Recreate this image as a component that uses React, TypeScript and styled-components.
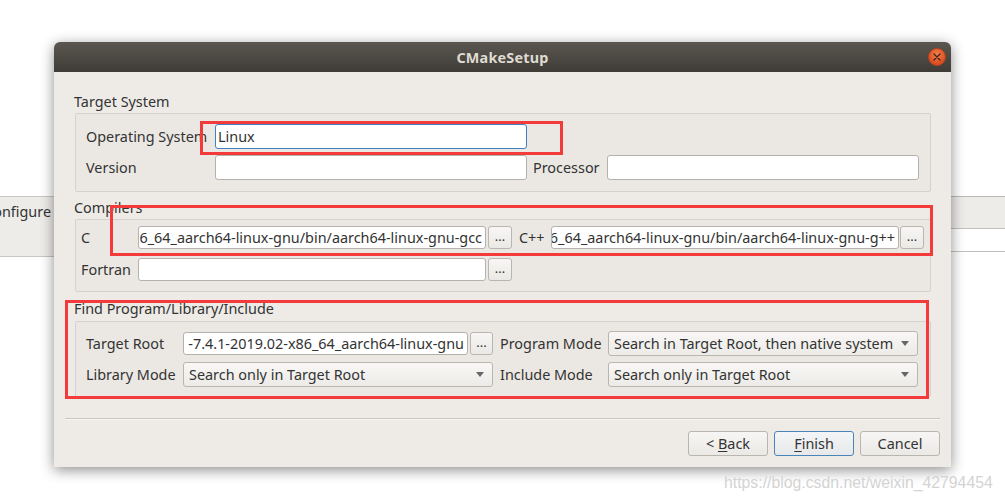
import React from 'react';
import styled, { createGlobalStyle } from 'styled-components';

const Global = createGlobalStyle`
  html, body { margin: 0; padding: 0; background: #ffffff; }
  body {
    width: 1005px; height: 503px; overflow: hidden;
    font-family: "Noto Sans", "Open Sans", "DejaVu Sans", sans-serif;
    color: #333333;
  }
  * { box-sizing: border-box; }
`;

const FS = '14.4px';

const Desktop = styled.div`
  position: relative;
  width: 1005px;
  height: 503px;
  overflow: hidden;
  background: #ffffff;
`;

const BackApp = styled.div`
  display: flex;
  justify-content: space-between;
  align-items: flex-start;
  padding-top: 196px;
`;

const LeftStrip = styled.div`
  width: 70px;
  height: 61px;
  border-top: 1px solid #c9c6c2;
  border-bottom: 1px solid #c9c6c2;
  background: #eeece9;
  display: flex;
  justify-content: flex-end;
  padding: 6px 19px 0 0;
  overflow: hidden;
  font-size: ${FS};
  line-height: 18px;
  white-space: nowrap;
  color: #333;
`;

const RightStrip = styled.div`
  width: 70px;
  display: flex;
  flex-direction: column;
`;

const RightBand = styled.div<{ $h: number; $bg: string }>`
  height: ${p => p.$h}px;
  background: ${p => p.$bg};
  border-bottom: 1px solid #c4c1bd;
`;

const RightTop = styled.div`
  border-top: 1px solid #bdbab6;
`;

const Dialog = styled.div`
  position: absolute;
  left: 54px;
  top: 42px;
  width: 897px;
  height: 425px;
  border-radius: 6px 6px 0 0;
  background: #eeebe7;
  box-shadow: 0 3px 14px rgba(0, 0, 0, 0.45);
  display: flex;
  flex-direction: column;
`;

const TitleBar = styled.div`
  position: relative;
  height: 30px;
  border-radius: 6px 6px 0 0;
  background: linear-gradient(#5a564f, #3f3c37);
  display: flex;
  align-items: center;
  justify-content: center;
  color: #dfdbd2;
  font-weight: 700;
  font-size: 14.4px;
  letter-spacing: 0.2px;
`;

const CloseButton = styled.div`
  position: absolute;
  right: 5px;
  top: 6px;
  width: 18px;
  height: 18px;
  border-radius: 50%;
  background: radial-gradient(circle at 50% 35%, #f2804f, #dc4d1f 70%);
  border: 1px solid #b8431c;
  display: flex;
  align-items: center;
  justify-content: center;
`;

const Body = styled.div`
  flex: 1;
  display: flex;
  flex-direction: column;
  padding: 0 11px 10px 11px;
`;

const Group = styled.div<{ $mt: number }>`
  margin-top: ${p => p.$mt}px;
  padding: 0 9px;
  display: flex;
  flex-direction: column;
`;

const GroupTitle = styled.div<{ $mb: number }>`
  font-size: ${FS};
  line-height: 18px;
  height: 18px;
  margin-bottom: ${p => p.$mb}px;
  white-space: nowrap;
`;

const Frame = styled.div<{ $cols: string; $rows: string; $pad: string; $gap: number }>`
  margin-left: 1px;
  border: 1px solid #d5d1cc;
  border-radius: 2px;
  background: #ebe8e4;
  padding: ${p => p.$pad};
  display: grid;
  grid-template-columns: ${p => p.$cols};
  grid-template-rows: ${p => p.$rows};
  row-gap: ${p => p.$gap}px;
  align-items: center;
`;

const Label = styled.div<{ $pl?: number }>`
  font-size: ${FS};
  line-height: 18px;
  white-space: nowrap;
  padding-left: ${p => p.$pl ?? 0}px;
`;

const LineEdit = styled.div<{ $focused?: boolean; $end?: boolean; $span?: number; $h: number }>`
  grid-column: ${p => (p.$span ? `span ${p.$span}` : 'auto')};
  height: ${p => p.$h}px;
  background: #ffffff;
  border: 1px solid ${p => (p.$focused ? '#3f82c3' : '#b5b1ab')};
  border-radius: 3px;
  display: flex;
  align-items: center;
  justify-content: ${p => (p.$end ? 'flex-end' : 'flex-start')};
  padding: 0 3px 0 2px;
  overflow: hidden;
  font-size: ${FS};
  white-space: nowrap;
  color: #333;
`;

const EditRow = styled.div`
  grid-column: span 3;
  display: flex;
`;

const FixedEdit = styled(LineEdit)`
  width: 312px;
  flex: none;
`;

const ToolButton = styled.div<{ $w: number; $h: number }>`
  justify-self: end;
  width: ${p => p.$w}px;
  height: ${p => p.$h}px;
  border: 1px solid #b9b5af;
  border-radius: 3px;
  background: linear-gradient(#f7f6f4, #ebe9e6);
  display: flex;
  align-items: center;
  justify-content: center;
  font-size: 13px;
  padding-bottom: 3px;
  color: #333;
`;

const Combo = styled.div<{ $span?: number }>`
  grid-column: ${p => (p.$span ? `span ${p.$span}` : 'auto')};
  height: 25px;
  border: 1px solid #b9b5af;
  border-radius: 3px;
  background: linear-gradient(#f8f7f5, #ecebe8);
  display: flex;
  align-items: center;
  justify-content: space-between;
  padding: 0 8px 0 5px;
  font-size: ${FS};
  white-space: nowrap;
  color: #333;
`;

const Arrow = styled.span`
  width: 0;
  height: 0;
  border-left: 4px solid transparent;
  border-right: 4px solid transparent;
  border-top: 5px solid #666;
`;

const Separator = styled.div`
  margin-top: 21px;
  height: 2px;
  border-top: 1px solid #c9c5c0;
  border-bottom: 1px solid #f8f7f5;
`;

const ButtonRow = styled.div`
  margin-top: 11px;
  display: flex;
  justify-content: flex-end;
  gap: 6px;
`;

const PushButton = styled.div<{ $default?: boolean }>`
  width: 80px;
  height: 25px;
  border: 1px solid ${p => (p.$default ? '#4b84b8' : '#b9b5af')};
  border-radius: 3px;
  background: ${p => (p.$default ? 'linear-gradient(#f4f5f6, #e6e8ea)' : 'linear-gradient(#f7f6f4, #ebe9e6)')};
  display: flex;
  align-items: center;
  justify-content: center;
  font-size: ${FS};
  color: #333;
  u { text-decoration-thickness: 1px; text-underline-offset: 2px; }
`;

const Annotation = styled.div<{ $x: number; $y: number; $w: number; $h: number }>`
  position: absolute;
  left: ${p => p.$x}px;
  top: ${p => p.$y}px;
  width: ${p => p.$w}px;
  height: ${p => p.$h}px;
  border: 3px solid #f33b3b;
  pointer-events: none;
`;

const Watermark = styled.div`
  position: absolute;
  left: 724px;
  top: 474px;
  font-family: "Liberation Sans", Arial, sans-serif;
  font-size: 15.8px;
  color: rgba(205, 205, 205, 0.9);
  text-shadow: 0 0 1px #fff;
  white-space: nowrap;
`;

export default function App() {
  return (
    <Desktop>
      <Global />
      <BackApp>
        <LeftStrip>onfigure</LeftStrip>
        <RightStrip>
          <RightTop />
          <RightBand $h={32} $bg="#eeece9" />
          <RightBand $h={23} $bg="#ffffff" />
        </RightStrip>
      </BackApp>

      <Dialog>
        <TitleBar>
          CMakeSetup
          <CloseButton>
            <svg width="8" height="8" viewBox="0 0 8 8">
              <path d="M1 1 L7 7 M7 1 L1 7" stroke="#3a2418" strokeWidth="1.3" strokeLinecap="round" />
            </svg>
          </CloseButton>
        </TitleBar>
        <Body>
          <Group $mt={21}>
            <GroupTitle $mb={2}>Target System</GroupTitle>
            <Frame $cols="129px 312px 80px 312px" $rows="25px 25px" $pad="10px 11px 11px 10px" $gap={6}>
              <Label>Operating System</Label>
              <EditRow>
                <FixedEdit $focused $h={25}>Linux</FixedEdit>
              </EditRow>
              <Label>Version</Label>
              <LineEdit $h={25} />
              <Label $pl={6}>Processor</Label>
              <LineEdit $h={25} />
            </Frame>
          </Group>

          <Group $mt={7}>
            <GroupTitle $mb={2}>Compilers</GroupTitle>
            <Frame $cols="57px 348px 26px 39px 348px 25px" $rows="23px 23px" $pad="6px 7px 10px 5px" $gap={9}>
              <Label>C</Label>
              <LineEdit $h={23} $end>6_64_aarch64-linux-gnu/bin/aarch64-linux-gnu-gcc</LineEdit>
              <ToolButton $w={24} $h={23}>...</ToolButton>
              <Label $pl={7}>C++</Label>
              <LineEdit $h={23} $end>6_64_aarch64-linux-gnu/bin/aarch64-linux-gnu-g++</LineEdit>
              <ToolButton $w={24} $h={23}>...</ToolButton>
              <Label>Fortran</Label>
              <LineEdit $h={23} />
              <ToolButton $w={24} $h={23}>...</ToolButton>
            </Frame>
          </Group>

          <Group $mt={8}>
            <GroupTitle $mb={3}>Find Program/Library/Include</GroupTitle>
            <Frame $cols="97px 285px 25px 115px 310px" $rows="23px 25px" $pad="10px 12px 9px 10px" $gap={7}>
              <Label>Target Root</Label>
              <LineEdit $h={23} $end>-7.4.1-2019.02-x86_64_aarch64-linux-gnu</LineEdit>
              <ToolButton $w={23} $h={23}>...</ToolButton>
              <Label $pl={7}>Program Mode</Label>
              <Combo>
                Search in Target Root, then native system
                <Arrow />
              </Combo>
              <Label>Library Mode</Label>
              <Combo $span={2}>
                Search only in Target Root
                <Arrow />
              </Combo>
              <Label $pl={7}>Include Mode</Label>
              <Combo>
                Search only in Target Root
                <Arrow />
              </Combo>
            </Frame>
          </Group>

          <Separator />
          <ButtonRow>
            <PushButton>&lt;&nbsp;<u>B</u>ack</PushButton>
            <PushButton $default><u>F</u>inish</PushButton>
            <PushButton>Cancel</PushButton>
          </ButtonRow>
        </Body>
      </Dialog>

      <Annotation $x={200} $y={121} $w={363} $h={34} />
      <Annotation $x={110} $y={205} $w={823} $h={51} />
      <Annotation $x={65} $y={300} $w={864} $h={99} />

      <Watermark>https://blog.csdn.net/weixin_42794454</Watermark>
    </Desktop>
  );
}
